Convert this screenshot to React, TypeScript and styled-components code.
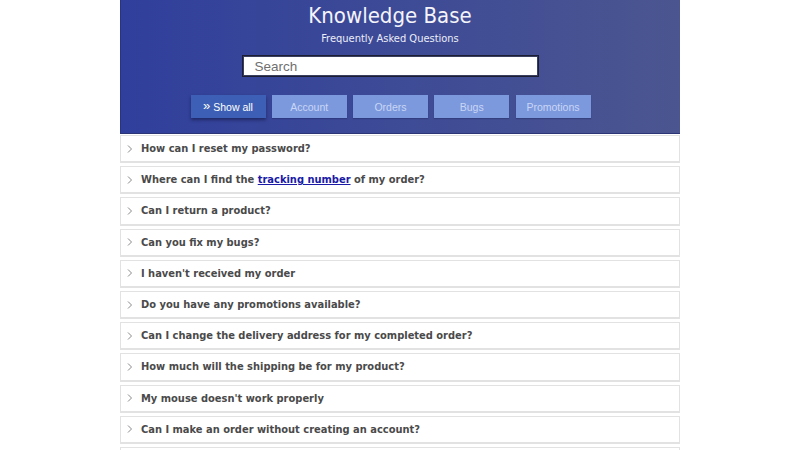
import React from "react";
import styled, { createGlobalStyle } from "styled-components";

const GlobalStyle = createGlobalStyle`
	html, body {
		margin: 0;
		padding: 0;
		background: #ffffff;
	}
	body {
		font-family: "DejaVu Sans Condensed", "DejaVu Sans", sans-serif;
		font-stretch: condensed;
	}
`;

const Page = styled.div`
	width: 560px;
	margin: 0 auto;
`;

const Header = styled.header`
	display: flex;
	flex-direction: column;
	align-items: center;
	height: 134px;
	box-sizing: border-box;
	padding: 1px 20px 0 0;
	background: linear-gradient(to right, #303f9c, #4b5690);
	border-bottom: 1px solid #2c3676;
	box-shadow: inset 1px 0 0 #283582;
`;

const Title = styled.h1`
	margin: 0;
	font-family: "DejaVu Sans Condensed", "DejaVu Sans", sans-serif;
	font-stretch: condensed;
	font-weight: 400;
	font-size: 22px;
	line-height: 30px;
	color: #f4f4fa;
`;

const Subtitle = styled.p`
	margin: 0;
	font-size: 11px;
	line-height: 16px;
	color: #eceef8;
`;

const SearchInput = styled.input`
	margin-top: 8px;
	width: 297px;
	height: 22px;
	box-sizing: border-box;
	border: 1px solid #1c1f33;
	box-shadow: inset 0 0 0 1px #3a3f60;
	padding: 0 12px;
	font-family: "Liberation Sans Narrow", "Liberation Sans", Arial, sans-serif;
	font-stretch: condensed;
	font-size: 13.5px;
	color: #333;
	outline: none;
	&::placeholder {
		color: #6f6f6f;
	}
`;

const Filters = styled.div`
	display: flex;
	gap: 6.25px;
	margin-top: 18px;
	padding-left: 1px;
`;

const FilterButton = styled.button<{ $active?: boolean }>`
	width: 75px;
	height: 23px;
	border: none;
	padding: 0;
	display: flex;
	align-items: center;
	justify-content: center;
	gap: 3px;
	font-family: "Liberation Sans Narrow", "Liberation Sans", Arial, sans-serif;
	font-stretch: condensed;
	font-size: 10.5px;
	background: ${(p) => (p.$active ? "#3d5fb5" : "#7c99de")};
	color: ${(p) => (p.$active ? "#ffffff" : "#c9d6f4")};
	box-shadow: ${(p) =>
		p.$active ? "0 2px 3px rgba(15, 20, 60, 0.55)" : "0 1px 1px rgba(20, 30, 80, 0.3)"};
`;

const Quote = styled.span`
	font-size: 13px;
	line-height: 10px;
	margin-top: -2px;
`;

const List = styled.div`
	display: flex;
	flex-direction: column;
	gap: 3px;
	padding-top: 1px;
`;

const Item = styled.div`
	display: flex;
	align-items: center;
	height: 28.2px;
	box-sizing: border-box;
	border: 1px solid #e2e2e2;
	border-bottom-width: 2px;
	background: #fff;
	padding-left: 6px;
`;

const Chevron = styled.svg`
	width: 6px;
	height: 10px;
	margin-right: 8px;
	fill: none;
	stroke: #8a8a8a;
	stroke-width: 1;
	flex-shrink: 0;
`;

const Question = styled.span`
	font-family: "DejaVu Sans Condensed", "DejaVu Sans", sans-serif;
	font-stretch: condensed;
	font-weight: 700;
	font-size: 11px;
	color: #4a4a4a;
	white-space: nowrap;
`;

const TrackLink = styled.a`
	color: #1a1aa6;
	text-decoration: underline;
`;

const categories = ["Show all", "Account", "Orders", "Bugs", "Promotions"];

const questions: React.ReactNode[] = [
	"How can I reset my password?",
	<>
		Where can I find the <TrackLink href="#">tracking number</TrackLink> of my
		order?
	</>,
	"Can I return a product?",
	"Can you fix my bugs?",
	"I haven't received my order",
	"Do you have any promotions available?",
	"Can I change the delivery address for my completed order?",
	"How much will the shipping be for my product?",
	"My mouse doesn't work properly",
	"Can I make an order without creating an account?",
	"What payment methods do you accept?",
];

export default function App() {
	return (
		<>
			<GlobalStyle />
			<Page>
				<Header>
					<Title>Knowledge Base</Title>
					<Subtitle>Frequently Asked Questions</Subtitle>
					<SearchInput placeholder="Search" />
					<Filters>
						{categories.map((c, i) => (
							<FilterButton key={c} $active={i === 0}>
								{i === 0 && <Quote>»</Quote>}
								{c}
							</FilterButton>
						))}
					</Filters>
				</Header>
				<List>
					{questions.map((q, i) => (
						<Item key={i}>
							<Chevron viewBox="0 0 6 10">
								<path d="M1 1.5 L4.5 5 L1 8.5" />
							</Chevron>
							<Question>{q}</Question>
						</Item>
					))}
				</List>
			</Page>
		</>
	);
}
